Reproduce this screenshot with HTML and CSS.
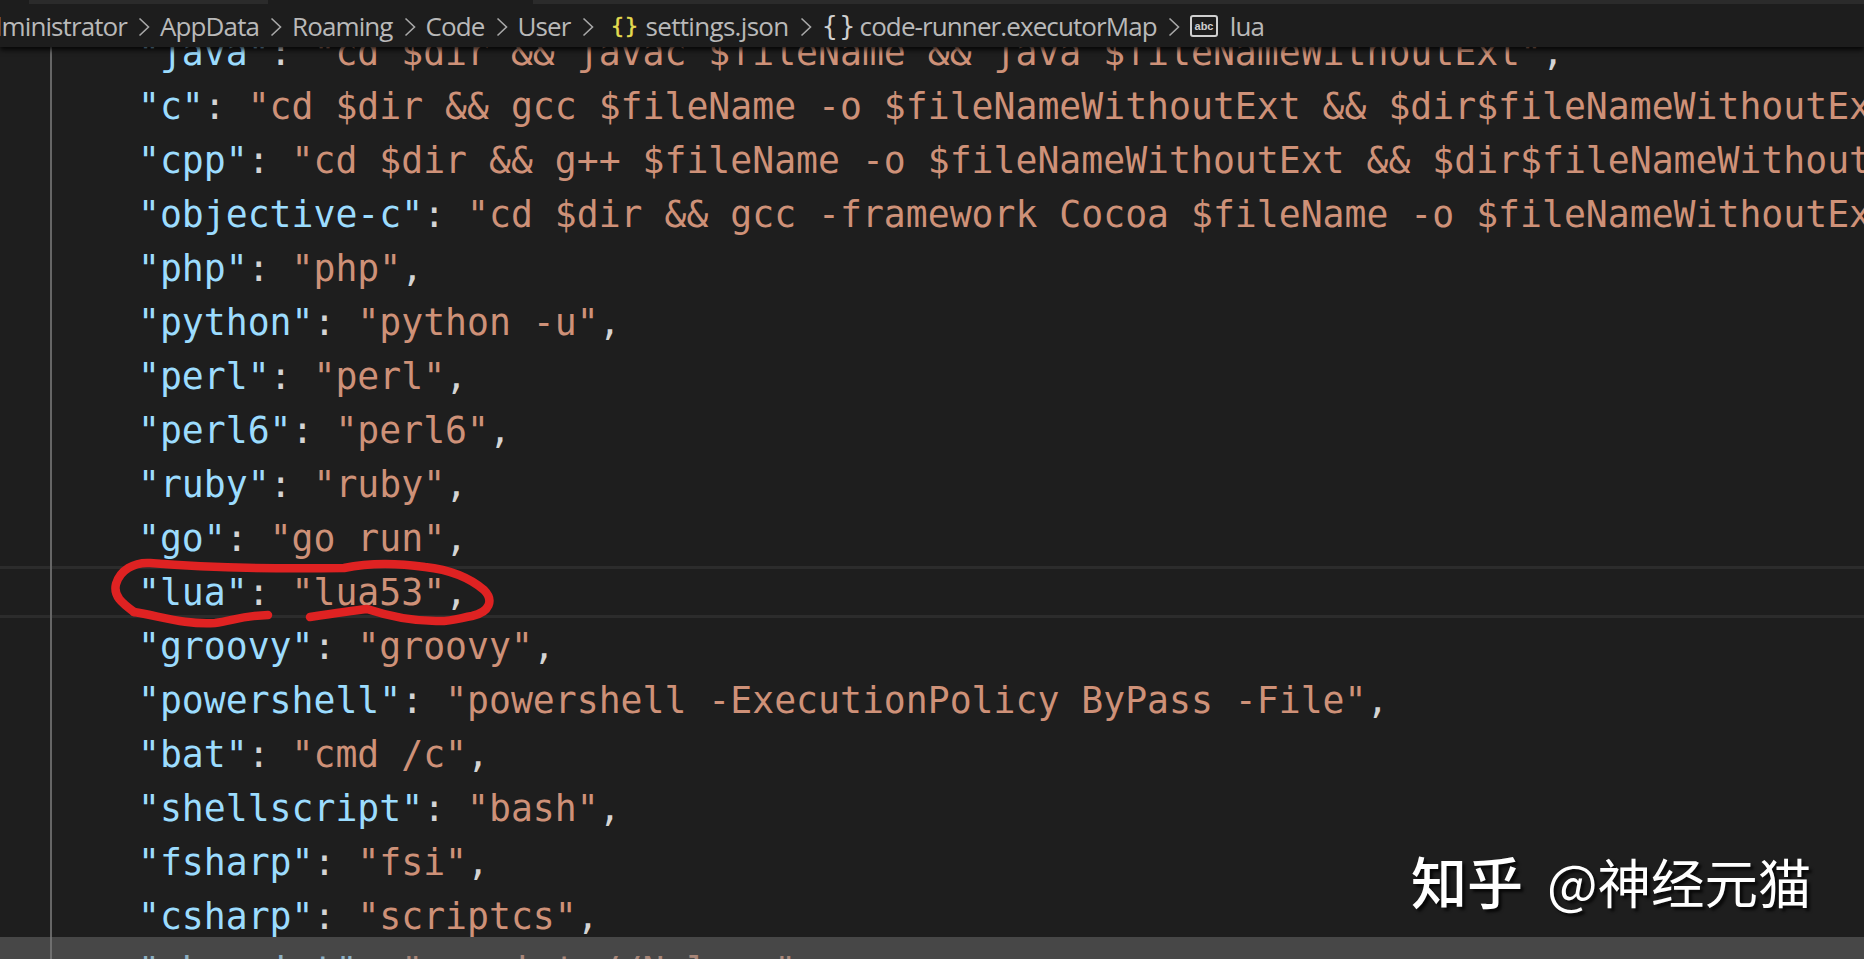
FILE: index.html
```html
<!DOCTYPE html>
<html lang="zh">
<head>
<meta charset="utf-8">
<title>settings.json</title>
<link rel="stylesheet" href="styles.css">
</head>
<body>
<div class="window">
  <div class="tabs"><span class="tab tab-a"></span><span class="tab tab-b"></span></div>
  <nav class="crumbs">
    <span class="crumb first">Administrator</span><svg class="chev" viewBox="0 0 12 20"><path d="M1.5 1.5 L10.5 10 L1.5 18.5"/></svg>
    <span class="crumb">AppData</span><svg class="chev" viewBox="0 0 12 20"><path d="M1.5 1.5 L10.5 10 L1.5 18.5"/></svg>
    <span class="crumb">Roaming</span><svg class="chev" viewBox="0 0 12 20"><path d="M1.5 1.5 L10.5 10 L1.5 18.5"/></svg>
    <span class="crumb">Code</span><svg class="chev" viewBox="0 0 12 20"><path d="M1.5 1.5 L10.5 10 L1.5 18.5"/></svg>
    <span class="crumb">User</span><svg class="chev" viewBox="0 0 12 20"><path d="M1.5 1.5 L10.5 10 L1.5 18.5"/></svg>
    <span class="braces yellow">{}</span><span class="crumb file">settings.json</span><svg class="chev" viewBox="0 0 12 20"><path d="M1.5 1.5 L10.5 10 L1.5 18.5"/></svg>
    <span class="braces">{}</span><span class="crumb">code-runner.executorMap</span><svg class="chev" viewBox="0 0 12 20"><path d="M1.5 1.5 L10.5 10 L1.5 18.5"/></svg>
    <svg class="abc" viewBox="0 0 28 22"><rect x="1" y="1" width="26" height="20" rx="2" fill="none" stroke="#cfcfcf" stroke-width="2"/><text x="14" y="15" text-anchor="middle" class="abc-text">abc</text></svg>
    <span class="crumb">lua</span>
  </nav>
  <main class="code">
    <div class="guide"></div>
    <div class="line"><span class="k">"java"</span><span class="p">: </span><span class="s">"cd $dir &amp;&amp; javac $fileName &amp;&amp; java $fileNameWithoutExt"</span><span class="p">,</span></div>
    <div class="line"><span class="k">"c"</span><span class="p">: </span><span class="s">"cd $dir &amp;&amp; gcc $fileName -o $fileNameWithoutExt &amp;&amp; $dir$fileNameWithoutExt"</span><span class="p">,</span></div>
    <div class="line"><span class="k">"cpp"</span><span class="p">: </span><span class="s">"cd $dir &amp;&amp; g++ $fileName -o $fileNameWithoutExt &amp;&amp; $dir$fileNameWithoutExt"</span><span class="p">,</span></div>
    <div class="line"><span class="k">"objective-c"</span><span class="p">: </span><span class="s">"cd $dir &amp;&amp; gcc -framework Cocoa $fileName -o $fileNameWithoutExt &amp;&amp; $dir$fileNameWithoutExt"</span><span class="p">,</span></div>
    <div class="line"><span class="k">"php"</span><span class="p">: </span><span class="s">"php"</span><span class="p">,</span></div>
    <div class="line"><span class="k">"python"</span><span class="p">: </span><span class="s">"python -u"</span><span class="p">,</span></div>
    <div class="line"><span class="k">"perl"</span><span class="p">: </span><span class="s">"perl"</span><span class="p">,</span></div>
    <div class="line"><span class="k">"perl6"</span><span class="p">: </span><span class="s">"perl6"</span><span class="p">,</span></div>
    <div class="line"><span class="k">"ruby"</span><span class="p">: </span><span class="s">"ruby"</span><span class="p">,</span></div>
    <div class="line"><span class="k">"go"</span><span class="p">: </span><span class="s">"go run"</span><span class="p">,</span></div>
    <div class="line current"><span class="k">"lua"</span><span class="p">: </span><span class="s">"lua53"</span><span class="p">,</span></div>
    <div class="line"><span class="k">"groovy"</span><span class="p">: </span><span class="s">"groovy"</span><span class="p">,</span></div>
    <div class="line"><span class="k">"powershell"</span><span class="p">: </span><span class="s">"powershell -ExecutionPolicy ByPass -File"</span><span class="p">,</span></div>
    <div class="line"><span class="k">"bat"</span><span class="p">: </span><span class="s">"cmd /c"</span><span class="p">,</span></div>
    <div class="line"><span class="k">"shellscript"</span><span class="p">: </span><span class="s">"bash"</span><span class="p">,</span></div>
    <div class="line"><span class="k">"fsharp"</span><span class="p">: </span><span class="s">"fsi"</span><span class="p">,</span></div>
    <div class="line"><span class="k">"csharp"</span><span class="p">: </span><span class="s">"scriptcs"</span><span class="p">,</span></div>
    <div class="line"><span class="k">"vbscript"</span><span class="p">: </span><span class="s">"cscript //Nologo"</span><span class="p">,</span></div>
  </main>
  <div class="hscroll"></div>
  <svg class="ink" viewBox="0 0 1864 959">
    <path d="M134 612 C122 603 113 596 116 584 C120 570 134 562 150 563 C210 568 280 569 344 568 C372 562 398 563 425 567 C452 570 470 578 484 590 C494 600 490 612 472 616 C460 618 450 622 436 621 C410 621 385 615 367 609 C350 611 330 614 310 617"/>
    <path d="M134 612 C160 616 185 625 215 623 C232 621 240 616 268 615"/>
  </svg>
  <div class="mark"><span class="mark-logo">知乎</span> @神经元猫</div>
</div>
</body>
</html>
```

FILE: styles.css
```css
* { box-sizing: border-box; }
html, body { margin: 0; height: 100%; background: #1e1e1e; }
.window { position: relative; width: 1864px; height: 959px; overflow: hidden; background: #1e1e1e; }

.tabs { position: absolute; top: 0; left: 0; right: 0; height: 4px; z-index: 3; display: flex; }
.tab { display: block; height: 4px; background: #2b2b2b; }
.tab-a { width: 239px; margin-left: 29px; }
.tab-b { width: 1331px; margin-left: 265px; }

.crumbs {
  position: absolute; top: 0; left: 0; right: 0; height: 47px; z-index: 2;
  padding-top: 4px; display: flex; align-items: center; white-space: nowrap;
  background: #1d1d1d; box-shadow: 0 3px 5px rgba(0,0,0,.8);
  font-family: "Open Sans", "Noto Sans", sans-serif; font-size: 26px; color: #b9b9b9; letter-spacing: -0.9px;
}
.crumb.first { margin-left: -29px; }
.crumb.file { letter-spacing: -0.68px; }
.chev { flex: none; width: 12px; height: 20px; margin: 2px 10px 0 11px; }
.chev path { fill: none; stroke: #a8a8a8; stroke-width: 1.6; }
.braces { flex: none; width: 25px; margin-right: 10px; color: #d0d0d0; letter-spacing: 1px; font-size: 26px; font-family: "DejaVu Sans", sans-serif; }
.braces:not(.yellow) { margin-right: 13px; }
.braces.yellow { color: #e4dc50; width: 21px; margin-left: 7px; margin-right: 14px; font-size: 22px; letter-spacing: 0; -webkit-text-stroke: .5px #e4dc50; }
.abc { flex: none; width: 28px; height: 22px; margin-right: 12px; }
.abc-text { font-family: "Liberation Sans", sans-serif; font-size: 11px; font-weight: 700; fill: #cfcfcf; letter-spacing: 0; }

.code {
  position: relative; padding-top: 26px; font-family: "DejaVu Sans Mono", "Liberation Mono", monospace;
  font-size: 36.45px; line-height: 54px; color: #d4d4d4;
}
.guide { position: absolute; top: 0; bottom: 0; left: 50px; width: 2px; background: #666; }
.line { height: 54px; padding-left: 138px; white-space: pre; }
.line.current { background: linear-gradient(#2c2c2c 0 3px, transparent 3px 49px, #2c2c2c 49px 52px, transparent 52px); }
.k { color: #9cdcfe; }
.s { color: #ce9178; }
.p { color: #d4d4d4; }

.hscroll { position: absolute; left: 0; right: 0; top: 937px; bottom: 0; background: rgba(121,121,121,.45); z-index: 1; }

.ink { position: absolute; inset: 0; width: 1864px; height: 959px; z-index: 4; pointer-events: none; }
.ink path { fill: none; stroke: #df2222; stroke-width: 8.5; stroke-linecap: round; stroke-linejoin: round; }

.mark {
  position: absolute; left: 1411px; top: 848px; z-index: 5; white-space: nowrap;
  font-family: "Noto Sans CJK SC", "Noto Sans", sans-serif; font-size: 53.5px; line-height: 64px; color: #fff;
  word-spacing: 12px; text-shadow: 3px 3px 3px rgba(0,0,0,.75);
}
.mark-logo { font-size: 56px; font-weight: 500; }
```
